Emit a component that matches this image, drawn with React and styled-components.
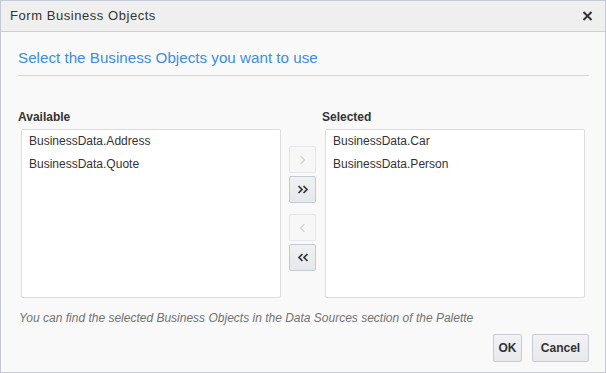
import React from "react";
import styled, { createGlobalStyle } from "styled-components";

const Global = createGlobalStyle`
  html, body { margin: 0; padding: 0; background: #ffffff; }
  body { font-family: "Liberation Sans", Arial, Helvetica, sans-serif; }
  * { box-sizing: border-box; }
`;

const Dialog = styled.div`
  width: 606px;
  height: 373px;
  border: 1px solid #c3c9d5;
  background: #f9f9f9;
  display: flex;
  flex-direction: column;
`;

const TitleBar = styled.div`
  height: 31px;
  flex: none;
  background: #efefef;
  border-bottom: 1px solid #c9ced7;
  display: flex;
  align-items: center;
  justify-content: space-between;
  padding: 0 12px 1px 9px;
`;

const Title = styled.div`
  font-size: 13px;
  letter-spacing: 0.55px;
  color: #333333;
`;

const CloseBtn = styled.button`
  border: 0;
  background: transparent;
  padding: 0;
  width: 12px;
  height: 12px;
  display: flex;
  align-items: center;
  justify-content: center;
  cursor: pointer;
`;

const Body = styled.div`
  flex: 1;
  display: flex;
  flex-direction: column;
  padding: 16px 16px 10px 17px;
`;

const Heading = styled.h2`
  margin: 0;
  font-size: 15.2px;
  font-weight: normal;
  line-height: 20px;
  color: #3b8fdd;
  padding-bottom: 7px;
  border-bottom: 1px solid #d3d6da;
`;

const Lists = styled.div`
  display: flex;
  align-items: flex-start;
  margin-top: 34px;
`;

const Panel = styled.div`
  width: 263px;
  display: flex;
  flex-direction: column;
`;

const Label = styled.div`
  font-size: 12px;
  font-weight: bold;
  line-height: 14px;
  color: #333333;
  margin-bottom: 5px;
`;

const ListBox = styled.ul`
  list-style: none;
  margin: 0 0 0 3px;
  padding: 0;
  height: 169px;
  background: #ffffff;
  border: 1px solid #dcdcdc;
  border-radius: 2px;
`;

const Item = styled.li`
  font-size: 12px;
  line-height: 23px;
  color: #333333;
  padding-left: 7px;
`;

const Shuttle = styled.div`
  width: 41px;
  padding-top: 36px;
  padding-left: 8px;
  display: flex;
  flex-direction: column;
  gap: 11px;
`;

const ButtonPair = styled.div`
  display: flex;
  flex-direction: column;
  gap: 3px;
`;

const MoveButton = styled.button`
  width: 27px;
  height: 27px;
  padding: 0;
  display: flex;
  align-items: center;
  justify-content: center;
  border-radius: 2px;
  border: 1px solid ${(p) => (p.disabled ? "#e4e6e9" : "#c4cad3")};
  background: ${(p) => (p.disabled ? "#f7f7f7" : "linear-gradient(#eef0f2, #e6e8eb)")};
  color: ${(p) => (p.disabled ? "#cfcfcf" : "#333333")};
`;

const Note = styled.div`
  margin-top: 13px;
  font-size: 12px;
  font-style: italic;
  line-height: 14px;
  color: #727272;
  padding-left: 1px;
`;

const Footer = styled.div`
  margin-top: auto;
  display: flex;
  justify-content: flex-end;
  gap: 10px;
`;

const ActionButton = styled.button`
  height: 28px;
  width: ${(p) => p.$w}px;
  padding: 0;
  font-family: "Liberation Sans", Arial, sans-serif;
  font-size: 12px;
  font-weight: bold;
  color: #333333;
  border: 1px solid #c6ccd5;
  border-radius: 2px;
  background: linear-gradient(#f1f2f4, #e7e9ec);
`;

const Chevron = ({ dir = "right" }) => (
  <svg width="7" height="10" viewBox="0 0 7 10">
    <path
      d={dir === "right" ? "M1.5 1 L5.5 5 L1.5 9" : "M5.5 1 L1.5 5 L5.5 9"}
      fill="none"
      stroke="currentColor"
      strokeWidth="1.1"
    />
  </svg>
);

const DoubleChevron = ({ dir = "right" }) => (
  <svg width="12" height="9" viewBox="0 0 12 9">
    {dir === "right" ? (
      <>
        <path d="M1.5 1 L5 4.5 L1.5 8" fill="none" stroke="currentColor" strokeWidth="1.7" />
        <path d="M6.5 1 L10 4.5 L6.5 8" fill="none" stroke="currentColor" strokeWidth="1.7" />
      </>
    ) : (
      <>
        <path d="M5.5 1 L2 4.5 L5.5 8" fill="none" stroke="currentColor" strokeWidth="1.7" />
        <path d="M10.5 1 L7 4.5 L10.5 8" fill="none" stroke="currentColor" strokeWidth="1.7" />
      </>
    )}
  </svg>
);

export default function App() {
  const available = ["BusinessData.Address", "BusinessData.Quote"];
  const selected = ["BusinessData.Car", "BusinessData.Person"];
  return (
    <>
      <Global />
      <Dialog>
        <TitleBar>
          <Title>Form Business Objects</Title>
          <CloseBtn aria-label="Close">
            <svg width="11" height="10" viewBox="0 0 11 10">
              <path d="M1.5 1 L9.5 9 M9.5 1 L1.5 9" stroke="#333" strokeWidth="2" strokeLinecap="butt" />
            </svg>
          </CloseBtn>
        </TitleBar>
        <Body>
          <Heading>Select the Business Objects you want to use</Heading>
          <Lists>
            <Panel>
              <Label>Available</Label>
              <ListBox>
                {available.map((a) => (
                  <Item key={a}>{a}</Item>
                ))}
              </ListBox>
            </Panel>
            <Shuttle>
              <ButtonPair>
                <MoveButton disabled>
                  <Chevron dir="right" />
                </MoveButton>
                <MoveButton>
                  <DoubleChevron dir="right" />
                </MoveButton>
              </ButtonPair>
              <ButtonPair>
                <MoveButton disabled>
                  <Chevron dir="left" />
                </MoveButton>
                <MoveButton>
                  <DoubleChevron dir="left" />
                </MoveButton>
              </ButtonPair>
            </Shuttle>
            <Panel>
              <Label>Selected</Label>
              <ListBox>
                {selected.map((a) => (
                  <Item key={a}>{a}</Item>
                ))}
              </ListBox>
            </Panel>
          </Lists>
          <Note>You can find the selected Business Objects in the Data Sources section of the Palette</Note>
          <Footer>
            <ActionButton $w={29}>OK</ActionButton>
            <ActionButton $w={57}>Cancel</ActionButton>
          </Footer>
        </Body>
      </Dialog>
    </>
  );
}
